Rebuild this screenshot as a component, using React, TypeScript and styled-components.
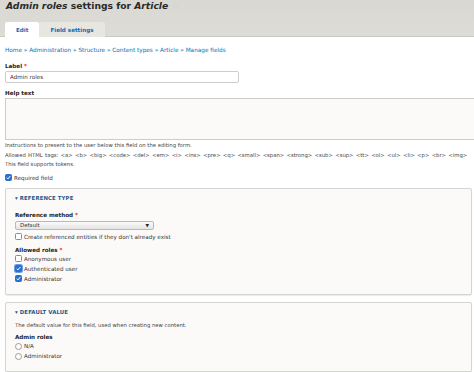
import React from "react";
import styled, { createGlobalStyle } from "styled-components";

const Global = createGlobalStyle`
  html, body { margin: 0; padding: 0; background: #fff; overflow: hidden; }
  body { font-family: "DejaVu Sans", "Liberation Sans", sans-serif; color: #333; width: 474px; height: 372px; }
`;

const Page = styled.div`
  width: 474px;
  height: 372px;
  overflow: hidden;
  display: flex;
  flex-direction: column;
`;

const Header = styled.header`
  background: linear-gradient(#d9d8d2, #dddcd6);
  border-bottom: 1px solid #c9c8c1;
  height: 36px;
  padding: 0 5px;
  display: flex;
  flex-direction: column;
  justify-content: space-between;
`;

const Title = styled.h1`
  margin: 0 0 0 1px;
  font-size: 9.2px;
  font-weight: bold;
  color: #2a2a2a;
  white-space: nowrap;
  line-height: 11px;
  em { font-style: italic; }
`;

const Star = styled.span`
  color: #d8d4b4;
  font-weight: normal;
  margin-left: 3px;
  font-size: 9px;
`;

const Tabs = styled.nav`
  display: flex;
  margin-bottom: -1px;
`;

const Tab = styled.a<{ $active?: boolean }>`
  display: flex;
  align-items: center;
  justify-content: center;
  height: 15px;
  padding: 0 11px;
  background: ${(p) => (p.$active ? "#fff" : "#e7e6e1")};
  color: #0a6fb3;
  font-size: 5.6px;
  font-weight: bold;
  border-radius: 2px 2px 0 0;
`;

const Body = styled.main`
  padding: 0 5px;
  display: flex;
  flex-direction: column;
`;

const Breadcrumb = styled.div`
  margin-top: 9px;
  font-size: 5.75px;
  line-height: 8px;
  color: #0a6fb3;
  white-space: nowrap;
`;

const FieldLabel = styled.div`
  font-size: 5.6px;
  font-weight: bold;
  line-height: 8px;
  color: #222;
  white-space: nowrap;
`;

const Req = styled.span`
  color: #e0281a;
  margin-left: 2px;
`;

const TextInput = styled.div`
  width: 234px;
  height: 12px;
  box-sizing: border-box;
  border: 1px solid #ccc;
  border-radius: 2px;
  background: #fff;
  font-size: 5.6px;
  line-height: 10px;
  padding-left: 4px;
  color: #333;
  margin-top: 1px;
`;

const TextArea = styled.div`
  width: 480px;
  height: 42px;
  box-sizing: border-box;
  border: 1px solid #ccc;
  border-right: none;
  background: #fbfaf8;
  margin-top: 1px;
`;

const Desc = styled.div<{ $wide?: boolean }>`
  font-size: 5.3px;
  line-height: 9.5px;
  color: #444;
  white-space: nowrap;
  word-spacing: ${(p) => (p.$wide ? "0.6px" : "0")};
`;

const CheckRow = styled.div`
  display: flex;
  align-items: center;
  gap: 2px;
  font-size: 5.6px;
  line-height: 10px;
  height: 10px;
  color: #333;
  white-space: nowrap;
`;

const Box = styled.span<{ $checked?: boolean; $focus?: boolean; $round?: boolean }>`
  width: 7px;
  height: 7px;
  box-sizing: border-box;
  border-radius: ${(p) => (p.$round ? "50%" : "1.5px")};
  border: 1px solid ${(p) => (p.$checked ? "#2a6fd0" : p.$round ? "#9a9a9a" : "#8a8a8a")};
  background: ${(p) => (p.$checked ? "#2a6fd0" : "#fff")};
  box-shadow: ${(p) => (p.$focus ? "0 0 0 1px #6aa0e8" : "none")};
  display: inline-flex;
  align-items: center;
  justify-content: center;
  flex: none;
`;

const Fieldset = styled.section<{ $h: number; $top: number }>`
  margin-top: ${(p) => p.$top}px;
  width: 467px;
  height: ${(p) => p.$h}px;
  flex: none;
  box-sizing: border-box;
  border: 1px solid #d4d4d0;
  border-radius: 2px;
  background: #fbfaf8;
  box-shadow: 0 1px 1px rgba(0, 0, 0, 0.08);
  padding: 5px 9px 0;
  display: flex;
  flex-direction: column;
`;

const Legend = styled.div`
  font-size: 5.4px;
  font-weight: bold;
  color: #1d5c8c;
  letter-spacing: 0.1px;
  line-height: 8px;
  text-transform: uppercase;
  white-space: nowrap;
`;

const Select = styled.div`
  width: 139px;
  height: 9px;
  flex: none;
  box-sizing: border-box;
  border: 1px solid #b9b9b9;
  border-radius: 2px;
  background: linear-gradient(#fafafa, #e4e4e4);
  display: flex;
  align-items: center;
  justify-content: space-between;
  padding: 0 4px;
  font-size: 5.4px;
  color: #333;
`;

const Arrow = styled.span`
  font-size: 4.5px;
  color: #222;
`;

const Gap = styled.div<{ $h: number }>`
  height: ${(p) => p.$h}px;
  flex: none;
`;

const Check = () => (
  <svg width="5" height="5" viewBox="0 0 10 10">
    <path d="M1.5 5.2 L4 7.8 L8.6 2" fill="none" stroke="#fff" strokeWidth="2" />
  </svg>
);

const CheckBox = ({ checked, focus }: { checked?: boolean; focus?: boolean }) => (
  <Box $checked={checked} $focus={focus}>{checked && <Check />}</Box>
);

export default function App() {
  return (
    <Page>
      <Global />
      <Header>
        <Title>
          <em>Admin roles</em> settings for <em>Article</em>
          <Star>☆</Star>
        </Title>
        <Tabs>
          <Tab $active>Edit</Tab>
          <Tab>Field settings</Tab>
        </Tabs>
      </Header>
      <Body>
        <Breadcrumb>
          Home » Administration » Structure » Content types » Article » Manage fields
        </Breadcrumb>
        <Gap $h={8} />
        <FieldLabel>
          Label<Req>*</Req>
        </FieldLabel>
        <TextInput>Admin roles</TextInput>
        <Gap $h={6} />
        <FieldLabel>Help text</FieldLabel>
        <TextArea />
        <Gap $h={1} />
        <Desc>Instructions to present to the user below this field on the editing form.</Desc>
        <Desc $wide>
          {"Allowed HTML tags: <a> <b> <big> <code> <del> <em> <i> <ins> <pre> <q> <small> <span> <strong> <sub> <sup> <tt> <ol> <ul> <li> <p> <br> <img>"}
        </Desc>
        <Desc>This field supports tokens.</Desc>
        <Gap $h={3} />
        <CheckRow>
          <CheckBox checked />
          Required field
        </CheckRow>
        <Fieldset $h={107} $top={5}>
          <Legend>▾ Reference type</Legend>
          <Gap $h={9} />
          <FieldLabel>
            Reference method<Req>*</Req>
          </FieldLabel>
          <Gap $h={2} />
          <Select>
            Default<Arrow>▼</Arrow>
          </Select>
          <Gap $h={2} />
          <CheckRow>
            <CheckBox />
            Create referenced entities if they don't already exist
          </CheckRow>
          <Gap $h={4} />
          <FieldLabel>
            Allowed roles<Req>*</Req>
          </FieldLabel>
          <CheckRow>
            <CheckBox />
            Anonymous user
          </CheckRow>
          <CheckRow>
            <CheckBox checked focus />
            Authenticated user
          </CheckRow>
          <CheckRow>
            <CheckBox checked />
            Administrator
          </CheckRow>
        </Fieldset>
        <Fieldset $h={70} $top={7}>
          <Legend>▾ Default value</Legend>
          <Gap $h={5} />
          <Desc>The default value for this field, used when creating new content.</Desc>
          <Gap $h={3} />
          <FieldLabel>Admin roles</FieldLabel>
          <CheckRow>
            <Box $round />
            N/A
          </CheckRow>
          <CheckRow>
            <Box $round />
            Administrator
          </CheckRow>
        </Fieldset>
      </Body>
    </Page>
  );
}
